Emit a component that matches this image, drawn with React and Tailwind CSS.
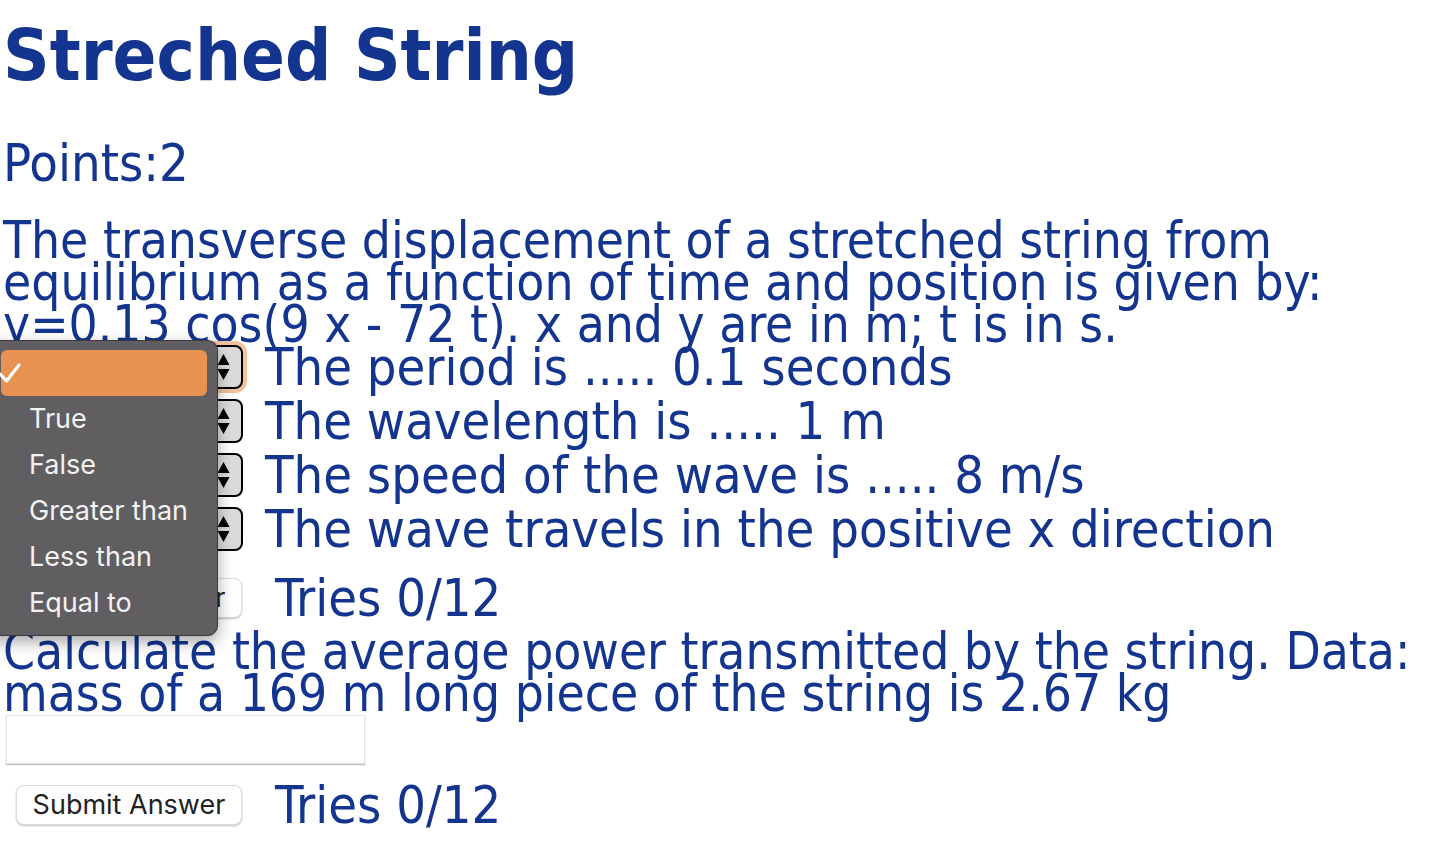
import React from "react";

const rows = [
  "The period is ..... 0.1 seconds",
  "The wavelength is ..... 1 m",
  "The speed of the wave is ..... 8 m/s",
  "The wave travels in the positive x direction",
];

function SelectBox({ focused }) {
  return (
    <div
      className={
        "rounded-[12px] p-[4px] " + (focused ? "bg-[#f2c29d]" : "bg-transparent")
      }
    >
      <div className="flex h-[44px] w-[236px] items-center justify-end rounded-[8px] border-2 border-black bg-gradient-to-r from-[#ffffff] via-[#f4f4f4] to-[#d9d9d9] pr-[11px]">
        <svg width="13" height="30" viewBox="0 0 13 30">
          <path d="M6.5 2 L12.5 13 L0.5 13 Z" fill="#000" />
          <path d="M6.5 28 L12.5 17 L0.5 17 Z" fill="#000" />
        </svg>
      </div>
    </div>
  );
}

function SubmitButton() {
  return (
    <button className="ml-[16px] flex h-[40px] w-[226px] items-center justify-center rounded-[8px] border border-[#dcdcdc] bg-white font-['Inter',sans-serif] text-[27px] text-[#222] shadow-[0_1px_2px_rgba(0,0,0,0.25)]">
      Submit Answer
    </button>
  );
}

export default function App() {
  return (
    <div className="relative min-h-screen bg-white font-['DejaVu_Sans_Condensed','DejaVu_Sans',sans-serif] text-[#13348f]">
      <div className="pt-[21px]">
        <h1 className="pl-[3px] text-[72px] font-bold leading-[68px]">Streched String</h1>

        <p className="mt-[50px] pl-[3px] text-[52px] leading-[48px]">Points:2</p>

        <p className="mt-[33px] pl-[3px] text-[51px] leading-[42px]">
          The transverse displacement of a stretched string from
          <br />
          equilibrium as a function of time and position is given by:
          <br />
          y=0.13 cos(9 x - 72 t). x and y are in m; t is in s.
        </p>

        <div className="-mt-[6px]">
          {rows.map((text, i) => (
            <div key={i} className="flex h-[54px] items-center">
              <div className="ml-[3px]">
                <SelectBox focused={i === 0} />
              </div>
              <span className="ml-[18px] text-[52px] leading-[54px]">{text}</span>
            </div>
          ))}
          <div className="flex h-[75px] items-center pt-[9px]">
            <SubmitButton />
            <span className="ml-[33px] text-[52px] leading-[54px]">Tries 0/12</span>
          </div>
        </div>

        <p className="pl-[3px] text-[51px] leading-[42px]">
          Calculate the average power transmitted by the string. Data:
          <br />
          mass of a 169 m long piece of the string is 2.67 kg
        </p>

        <input
          type="text"
          className="ml-[6px] block h-[49px] w-[359px] border border-[#e4e4e4] bg-white shadow-[0_1px_1px_rgba(0,0,0,0.25)] outline-none"
        />

        <div className="mt-[21px] flex h-[40px] items-center">
          <SubmitButton />
          <span className="ml-[33px] text-[52px] leading-[54px]">Tries 0/12</span>
        </div>
      </div>

      {/* open select menu */}
      <div className="absolute left-[-12px] top-[340px] w-[230px] rounded-[10px] border border-[#3c3a3c] bg-[#615e61] py-[9px] pl-[12px] pr-[10px] font-['Inter',sans-serif] text-[27px] text-[#f2f2f2] shadow-[0_6px_16px_rgba(0,0,0,0.35)]">
        <div className="flex h-[46px] items-center rounded-[6px] bg-[#e89252]">
          <svg width="24" height="24" viewBox="0 0 24 24" className="-ml-[3px]">
            <path d="M2 13 L8.5 20 L21 4" fill="none" stroke="#fff" strokeWidth="3.2" strokeLinecap="round" strokeLinejoin="round" />
          </svg>
        </div>
        {["True", "False", "Greater than", "Less than", "Equal to"].map((o) => (
          <div key={o} className="flex h-[46px] items-center pl-[28px]">
            {o}
          </div>
        ))}
      </div>
    </div>
  );
}
